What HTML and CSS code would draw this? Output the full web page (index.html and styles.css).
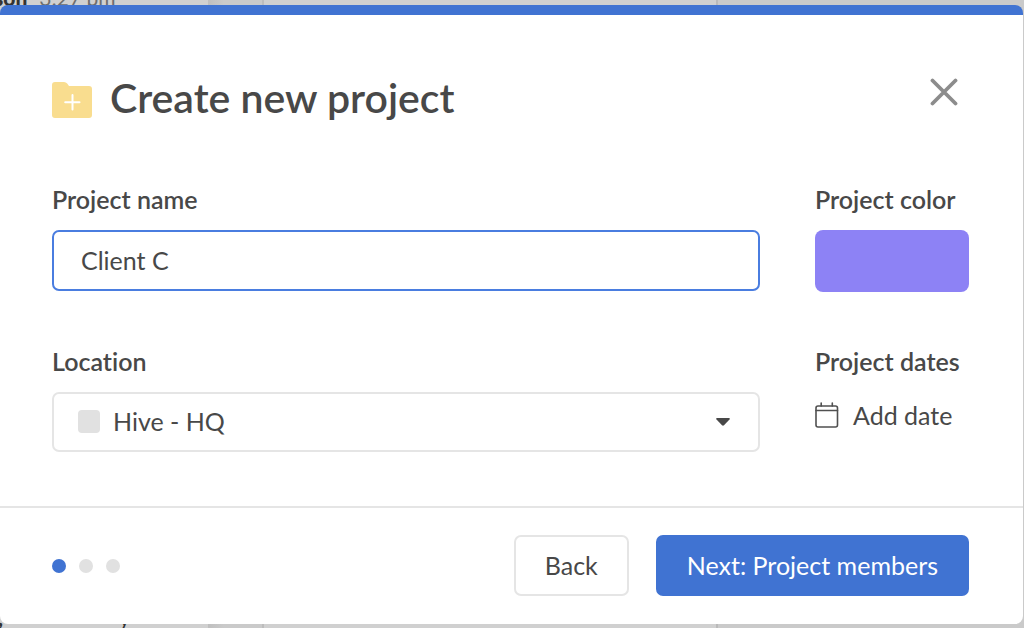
FILE: index.html
```html
<!DOCTYPE html>
<html lang="en">
<head>
<meta charset="utf-8">
<meta name="viewport" content="width=device-width, initial-scale=1">
<title>Create new project</title>
<link rel="stylesheet" href="styles.css">
</head>
<body>
<div class="backdrop" aria-hidden="true">
  <div class="backdrop-chat">
    <p class="chat-line chat-top"><b>son</b><span>3:27 pm</span></p>
    <p class="chat-line chat-bottom"><b>,</b><span>y</span></p>
  </div>
  <div class="backdrop-gutter"></div>
  <div class="backdrop-board"></div>
  <div class="backdrop-rest"></div>
</div>
<main class="modal" role="dialog" aria-labelledby="modal-title">
  <header class="modal-header">
    <svg class="folder-icon" width="40" height="36" viewBox="0 0 40 36" aria-hidden="true">
      <path fill="#f9dd8f" d="M3 0H12Q14 0 15.200 1.500L17 4H37Q40 4 40 7V33Q40 36 37 36H3Q0 36 0 33V3Q0 0 3 0Z"/>
      <path stroke="#fff" stroke-width="2" stroke-linecap="round" d="M20.500 13V27.500M13.200 20.300H27.500"/>
    </svg>
    <h1 class="modal-title" id="modal-title">Create new project</h1>
    <button class="close-button" type="button" aria-label="Close">
      <svg width="28" height="28" viewBox="0 0 28 28" aria-hidden="true">
        <path fill="none" stroke="#8c8c8c" stroke-width="3.800" stroke-linecap="round" d="M2.500 2.500L25.500 25.500M25.500 2.500L2.500 25.500"/>
      </svg>
    </button>
  </header>
  <form class="project-form">
    <div class="field">
      <label class="field-label" for="project-name">Project name</label>
      <input class="text-input" id="project-name" type="text" value="Client C">
    </div>
    <div class="field">
      <label class="field-label" for="project-color">Project color</label>
      <button class="color-button" id="project-color" type="button"></button>
    </div>
    <div class="field">
      <label class="field-label" for="location">Location</label>
      <div class="select-wrap">
        <select class="select-input" id="location"><option>Hive - HQ</option></select>
        <span class="select-swatch"></span>
        <svg class="select-arrow" width="14" height="8" viewBox="0 0 14 8" aria-hidden="true">
          <path fill="#484848" d="M1 0H13Q14.400 .3 13.500 1.500L8 7.300Q7 8.200 6 7.300L.5 1.500Q-.4 .3 1 0Z"/>
        </svg>
      </div>
    </div>
    <div class="field">
      <label class="field-label" for="project-dates">Project dates</label>
      <button class="date-button" id="project-dates" type="button">
        <svg width="24" height="26" viewBox="0 0 24 26" fill="none" stroke="#505050" stroke-width="1.600" stroke-linecap="round" aria-hidden="true">
          <rect x="1" y="4" width="21.500" height="21" rx="2"/>
          <path d="M1 8.500H22.500M6.200 1V4M17.300 1V4"/>
        </svg>
        Add date
      </button>
    </div>
  </form>
  <footer class="modal-footer">
    <div class="steps" role="img" aria-label="Step 1 of 3">
      <span class="step step-active"></span><span class="step"></span><span class="step"></span>
    </div>
    <div class="actions">
      <button class="button" type="button">Back</button>
      <button class="button button-primary" type="button">Next: Project members</button>
    </div>
  </footer>
</main>
</body>
</html>
```
FILE: styles.css
```css
* {
  box-sizing: border-box;
}

body {
  margin: 0;
  background: #cacaca;
  color: #484848;
  font: 25px/30px Lato, "Open Sans", sans-serif;
  font-variant-ligatures: none;
}

button,
input,
select {
  margin: 0;
  color: inherit;
  font: inherit;
}

button {
  cursor: pointer;
}

.backdrop {
  position: fixed;
  inset: 0;
  z-index: -1;
  display: grid;
  grid-template-columns: 208px 54px 456px 1fr;
  overflow: hidden;
}

.backdrop-chat {
  position: relative;
  background: #d0d0d0;
}

.backdrop-gutter {
  background: linear-gradient(90deg, #bfbfbf, #cacaca 16px);
}

.backdrop-board {
  border-left: 2px solid #bdbdbd;
  border-right: 2px solid #bababa;
  background: #d0d0d0;
}

.chat-line {
  position: absolute;
  display: flex;
  gap: 12px;
  margin: 0;
  color: #6e6e6e;
  font-size: 21px;
  line-height: 24px;
  white-space: nowrap;
}

.chat-line b {
  color: #333;
  font-weight: 900;
}

.chat-top {
  top: -14px;
  left: -6px;
}

.chat-bottom {
  bottom: -2px;
  left: -2px;
  gap: 116px;
  color: #333;
}

.modal {
  margin: 5px 1px 4px 0;
  overflow: hidden;
  border-top: 10px solid #4073d2;
  border-radius: 8px;
  background: #fff;
}

.modal-header {
  display: flex;
  align-items: flex-start;
  padding: 59px 61px 0 52px;
}

.folder-icon {
  flex: none;
  margin: 8px 18px 0 0;
}

.modal-title {
  flex: 1;
  margin: 0;
  font-size: 41px;
  font-weight: 600;
  line-height: 48px;
}

.close-button {
  display: grid;
  place-items: center;
  width: 36px;
  height: 36px;
  padding: 0;
  border: 0;
  background: none;
}

.project-form {
  display: grid;
  grid-template-columns: 1fr 154px;
  gap: 54px 55px;
  padding: 62px 54px 54px 52px;
}

.field {
  display: flex;
  flex-direction: column;
  align-items: flex-start;
  gap: 16px;
  min-width: 0;
}

.field-label {
  font-weight: 600;
  white-space: nowrap;
}

.text-input {
  width: 100%;
  height: 61px;
  padding: 0 27px 2px;
  border: 2px solid #4a7de0;
  border-radius: 7px;
  outline: 0;
  background: #fff;
}

.color-button {
  width: 100%;
  height: 62px;
  border: 0;
  border-radius: 8px;
  background: #8d82f5;
}

.select-wrap {
  position: relative;
  width: 100%;
}

.select-input {
  display: block;
  width: 100%;
  height: 60px;
  padding: 0 56px 2px 59px;
  border: 2px solid #e5e5e5;
  border-radius: 7px;
  appearance: none;
  background: #fff;
}

.select-swatch {
  position: absolute;
  top: 18px;
  left: 26px;
  width: 22px;
  height: 23px;
  border-radius: 4px;
  background: #e1e1e1;
  pointer-events: none;
}

.select-arrow {
  position: absolute;
  top: 26px;
  right: 30px;
  pointer-events: none;
}

.date-button {
  display: flex;
  align-items: center;
  gap: 14px;
  padding: 8px 0;
  border: 0;
  background: none;
  white-space: nowrap;
}

.modal-footer {
  display: flex;
  align-items: center;
  justify-content: space-between;
  padding: 27px 54px 28px 52px;
  border-top: 2px solid #e5e5e5;
}

.steps {
  display: flex;
  gap: 13px;
}

.step {
  width: 14px;
  height: 14px;
  border-radius: 50%;
  background: #e1e1e1;
}

.step-active {
  background: #4073d2;
}

.actions {
  display: flex;
  gap: 27px;
}

.button {
  height: 61px;
  padding: 0 29px 2px;
  border: 2px solid #e5e5e5;
  border-radius: 7px;
  background: #fff;
  white-space: nowrap;
}

.button-primary {
  border-color: #4073d2;
  background: #4073d2;
  color: #fff;
}
```
